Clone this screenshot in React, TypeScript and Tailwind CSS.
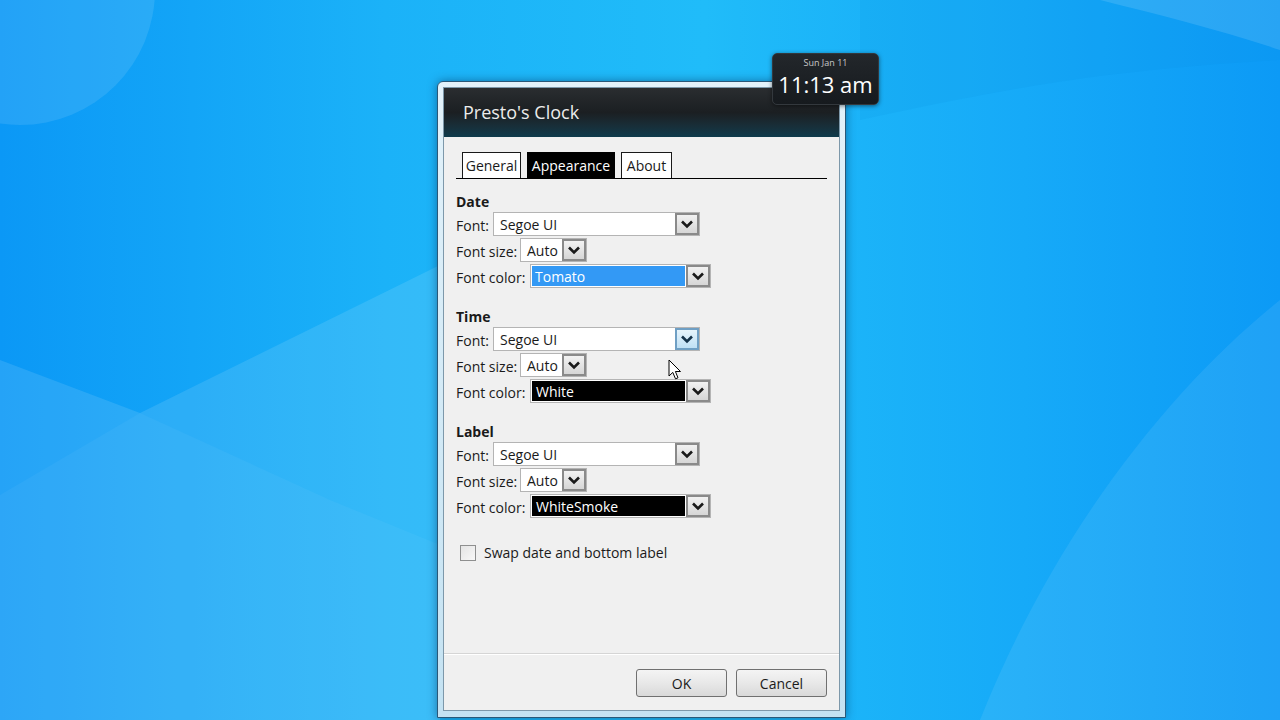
import React from "react";

const FONT = { fontFamily: '"Open Sans", "Noto Sans", sans-serif' };

function Chevron({ color = "#1a1a1a" }: { color?: string }) {
  return (
    <svg width="14" height="10" viewBox="0 0 14 10">
      <path d="M2 2.5 L7 7.5 L12 2.5" fill="none" stroke={color} strokeWidth="2.6" strokeLinejoin="miter" />
    </svg>
  );
}

function DropBtn({ hover = false }: { hover?: boolean }) {
  return (
    <div
      className={
        hover
          ? "flex h-full w-[24px] shrink-0 items-center justify-center border-2 border-[#6f9fc4] bg-gradient-to-b from-[#e6f4fc] to-[#bfe0f5]"
          : "flex h-full w-[24px] shrink-0 items-center justify-center border-2 border-[#8a8a8a] bg-gradient-to-b from-[#f2f2f2] to-[#d6d6d6]"
      }
    >
      <Chevron color={hover ? "#14324a" : "#1a1a1a"} />
    </div>
  );
}

function Combo({
  width,
  text,
  variant = "plain",
  hover = false,
}: {
  width: number;
  text: string;
  variant?: "plain" | "selected" | "black";
  hover?: boolean;
}) {
  return (
    <div className="flex h-[24px] items-stretch border border-[#b4b4b4] bg-white" style={{ width }}>
      <div className="flex flex-1 items-stretch p-[1px]">
        {variant === "plain" && (
          <span className="flex items-center pl-[5px] text-[14px] text-[#1a1a1a]">{text}</span>
        )}
        {variant === "selected" && (
          <span className="flex flex-1 items-center bg-[#3399f5] pl-[3px] text-[14px] text-white">{text}</span>
        )}
        {variant === "black" && (
          <span className="flex flex-1 items-center bg-black pl-[4px] text-[14px] text-white">{text}</span>
        )}
      </div>
      <DropBtn hover={hover} />
    </div>
  );
}

function Row({ label, labelW, children }: { label: string; labelW: number; children: React.ReactNode }) {
  return (
    <div className="flex h-[26px] items-center">
      <span className="shrink-0 pt-[3px] text-[14px] text-[#1a1a1a]" style={{ width: labelW }}>
        {label}
      </span>
      {children}
    </div>
  );
}

function Section({
  title,
  color,
  colorVariant,
  hoverFont = false,
}: {
  title: string;
  color: string;
  colorVariant: "selected" | "black";
  hoverFont?: boolean;
}) {
  return (
    <div className="flex flex-col">
      <div className="flex h-[20px] items-center text-[14px] font-bold text-[#1a1a1a]">{title}</div>
      <Row label="Font:" labelW={37}>
        <Combo width={207} text="Segoe UI" hover={hoverFont} />
      </Row>
      <Row label="Font size:" labelW={64}>
        <Combo width={67} text="Auto" />
      </Row>
      <Row label="Font color:" labelW={74}>
        <Combo width={181} text={color} variant={colorVariant} />
      </Row>
    </div>
  );
}

function Tab({ label, w, active = false }: { label: string; w: number; active?: boolean }) {
  return (
    <div
      className={
        active
          ? "flex h-[26px] items-center justify-center border border-b-0 border-black bg-black text-[14px] text-white"
          : "flex h-[26px] items-center justify-center border border-b-0 border-[#1a1a1a] bg-white text-[14px] text-[#1a1a1a]"
      }
      style={{ width: w }}
    >
      {label}
    </div>
  );
}

function Wallpaper() {
  return (
    <svg className="absolute inset-0" width="1280" height="720" viewBox="0 0 1280 720">
      <defs>
        <linearGradient id="bg" x1="0" y1="0" x2="1" y2="0">
          <stop offset="0" stopColor="#0b98f6" />
          <stop offset="0.3" stopColor="#1bb2f8" />
          <stop offset="0.55" stopColor="#20bcf9" />
          <stop offset="0.8" stopColor="#16aaf8" />
          <stop offset="1" stopColor="#0c9af6" />
        </linearGradient>
      </defs>
      <rect width="1280" height="720" fill="url(#bg)" />
      <circle cx="20" cy="-10" r="135" fill="#ffffff" opacity="0.1" />
      <path d="M0 360 L140 413 L440 265 L440 720 L0 720 Z" fill="#ffffff" opacity="0.11" />
      <path d="M0 495 L140 413 L330 500 L440 545 L440 720 L0 720 Z" fill="#ffffff" opacity="0.04" />
      <path d="M860 120 C 1000 90, 1100 70, 1280 60 L1280 0 L860 0 Z" fill="#0a8fe0" opacity="0.12" />
      <path d="M1100 0 L1280 0 L1280 50 C 1220 30, 1160 15, 1100 0 Z" fill="#ffffff" opacity="0.12" />
      <path d="M1280 300 C 1180 380, 1060 520, 980 720 L1280 720 Z" fill="#ffffff" opacity="0.08" />
    </svg>
  );
}

function Cursor() {
  return (
    <svg className="absolute left-[668px] top-[359px]" width="14" height="22" viewBox="0 0 14 22">
      <path
        d="M1 1 L1 17 L4.8 13.4 L7.5 19.8 L10 18.8 L7.4 12.5 L12.5 12.5 Z"
        fill="#ffffff"
        stroke="#000000"
        strokeWidth="1"
        strokeLinejoin="round"
      />
    </svg>
  );
}

export default function App() {
  return (
    <div className="relative h-[720px] w-[1280px] overflow-hidden" style={FONT}>
      <Wallpaper />

      {/* Dialog window */}
      <div className="absolute left-[437px] top-[81px] flex h-[637px] w-[409px] flex-col rounded-t-[6px] border border-[#2a5878] bg-gradient-to-b from-[#e3f2fa] to-[#c4e2f2] px-[5px] pt-[5px] pb-[6px] shadow-[0_0_10px_rgba(0,40,80,0.5)]">
        <div className="flex flex-1 flex-col border border-[#7d98aa]">
          {/* Title bar */}
          <div className="flex h-[49px] items-center bg-gradient-to-b from-[#2a2d30] via-[#1b1f22] to-[#0e3b4c] pl-[19px]">
            <span className="text-[18px] text-[#ececec]">Presto's Clock</span>
          </div>
          {/* Content */}
          <div className="flex flex-1 flex-col bg-[#f0f0f0]">
            <div className="flex flex-1 flex-col px-[12px] pt-[15px]">
              <div className="flex items-end gap-[6px] border-b border-black pl-[6px]">
                <Tab label="General" w={59} />
                <Tab label="Appearance" w={88} active />
                <Tab label="About" w={51} />
              </div>
              <div className="mt-[12px] flex flex-col gap-[17px]">
                <Section title="Date" color="Tomato" colorVariant="selected" />
                <Section title="Time" color="White" colorVariant="black" hoverFont />
                <Section title="Label" color="WhiteSmoke" colorVariant="black" />
              </div>
              <div className="mt-[23px] flex items-center gap-[8px] pl-[4px]">
                <div className="h-[16px] w-[16px] border border-[#8e8f8f] bg-gradient-to-br from-[#e4e4e4] to-[#f8f8f8]" />
                <span className="text-[14px] text-[#1a1a1a]">Swap date and bottom label</span>
              </div>
            </div>
            <div className="flex justify-end gap-[9px] border-t border-[#d5d5d5] px-[12px] pt-[15px] pb-[13px] shadow-[inset_0_1px_0_#ffffff]">
              <button className="flex h-[28px] w-[91px] items-center justify-center rounded-[3px] border border-[#707070] bg-gradient-to-b from-[#f4f4f4] via-[#e8e8e8] to-[#d9d9d9] text-[14px] text-[#1a1a1a]">
                OK
              </button>
              <button className="flex h-[28px] w-[91px] items-center justify-center rounded-[3px] border border-[#707070] bg-gradient-to-b from-[#f4f4f4] via-[#e8e8e8] to-[#d9d9d9] text-[14px] text-[#1a1a1a]">
                Cancel
              </button>
            </div>
          </div>
        </div>
      </div>

      {/* Clock gadget */}
      <div className="absolute left-[772px] top-[53px] flex h-[52px] w-[107px] flex-col items-center rounded-[5px] border border-[#33383d] bg-gradient-to-b from-[#23272b] to-[#161a1e] pt-[3px] shadow-[0_1px_4px_rgba(0,0,0,0.5)]">
        <span className="text-[9px] leading-[12px] text-[#c8c8c8]">Sun Jan 11</span>
        <span className="text-[22px] leading-[30px] text-white">11:13 am</span>
      </div>

      <Cursor />
    </div>
  );
}
